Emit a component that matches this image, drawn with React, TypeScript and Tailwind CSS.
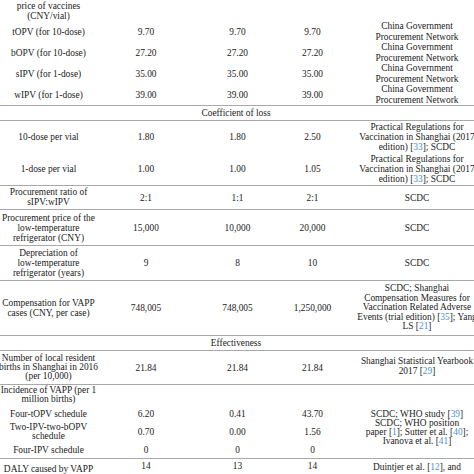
import React from "react";

type Cell = React.ReactNode;

interface Row {
  h: number;
  cells?: Cell[];
  section?: string;
  border?: boolean;
}

function Ref({ n }: { n: number }) {
  return (
    <>
      [<span className="text-[#4b8fd3]">{n}</span>]
    </>
  );
}

function Lines({ lines, lh = "leading-[10px]" }: { lines: Cell[]; lh?: string }) {
  return (
    <div className={`flex flex-col items-center whitespace-nowrap ${lh}`}>
      {lines.map((l, i) => (
        <span key={i}>{l}</span>
      ))}
    </div>
  );
}

const govt = <Lines lines={["China Government", "Procurement Network"]} lh="leading-[10.5px]" />;
const regs = (
  <Lines
    lines={[
      "Practical Regulations for",
      "Vaccination in Shanghai (2017",
      <>
        edition) <Ref n={33} />; SCDC
      </>,
    ]}
  />
);

const rows: Row[] = [
  { h: 21, cells: [<Lines lines={["price of vaccines", "(CNY/vial)"]} />, "", "", "", ""] },
  { h: 20, cells: ["tOPV (for 10-dose)", "9.70", "9.70", "9.70", govt] },
  { h: 20, cells: ["bOPV (for 10-dose)", "27.20", "27.20", "27.20", govt] },
  { h: 20, cells: ["sIPV (for 1-dose)", "35.00", "35.00", "35.00", govt] },
  { h: 21, cells: ["wIPV (for 1-dose)", "39.00", "39.00", "39.00", govt], border: true },
  { h: 15, section: "Coefficient of loss", border: true },
  { h: 33, cells: ["10-dose per vial", "1.80", "1.80", "2.50", regs] },
  { h: 32, cells: ["1-dose per vial", "1.00", "1.00", "1.05", regs], border: true },
  {
    h: 24,
    cells: [<Lines lines={["Procurement ratio of", "sIPV:wIPV"]} lh="leading-[9.5px]" />, "2:1", "1:1", "2:1", "SCDC"],
    border: true,
  },
  {
    h: 36,
    cells: [
      <Lines lines={["Procurement price of the", "low-temperature", "refrigerator (CNY)"]} />,
      "15,000",
      "10,000",
      "20,000",
      "SCDC",
    ],
    border: true,
  },
  {
    h: 35,
    cells: [
      <Lines lines={["Depreciation of", "low-temperature", "refrigerator (years)"]} />,
      "9",
      "8",
      "10",
      "SCDC",
    ],
    border: true,
  },
  {
    h: 55,
    cells: [
      <Lines lines={["Compensation for VAPP", "cases (CNY, per case)"]} />,
      "748,005",
      "748,005",
      "1,250,000",
      <Lines
        lh="leading-[9.5px]"
        lines={[
          "SCDC; Shanghai",
          "Compensation Measures for",
          "Vaccination Related Adverse",
          <>
            Events (trial edition) <Ref n={35} />; Yang
          </>,
          <>
            LS <Ref n={21} />
          </>,
        ]}
      />,
    ],
    border: true,
  },
  { h: 15, section: "Effectiveness", border: true },
  {
    h: 34,
    cells: [
      <Lines lh="leading-[9px]" lines={["Number of local resident", "births in Shanghai in 2016", "(per 10,000)"]} />,
      "21.84",
      "21.84",
      "21.84",
      <div className="-mt-[4px]">
        <Lines
          lines={[
            "Shanghai Statistical Yearbook",
            <>
              2017 <Ref n={29} />
            </>,
          ]}
        />
      </div>,
    ],
    border: true,
  },
  {
    h: 21,
    cells: [<Lines lh="leading-[9px]" lines={["Incidence of VAPP (per 1", "million births)"]} />, "", "", "", ""],
  },
  {
    h: 16,
    cells: [
      "Four-tOPV schedule",
      "6.20",
      "0.41",
      "43.70",
      <>
        SCDC; WHO study <Ref n={39} />
      </>,
    ],
  },
  {
    h: 21,
    cells: [
      <Lines lh="leading-[9px]" lines={["Two-IPV-two-bOPV", "schedule"]} />,
      "0.70",
      "0.00",
      "1.56",
      <div className="h-[21px] flex flex-col justify-center">
        <Lines
          lh="leading-[9px]"
          lines={[
            "SCDC; WHO position",
            <>
              paper <Ref n={1} />; Sutter et al. <Ref n={40} />;
            </>,
            <>
              Ivanova et al. <Ref n={41} />
            </>,
          ]}
        />
      </div>,
    ],
  },
  { h: 16, cells: ["Four-IPV schedule", "0", "0", "0", ""], border: true },
];

const widths = ["w-[97px]", "w-[98px]", "w-[85px]", "w-[65px]", "w-[144px]"];

export default function App() {
  return (
    <div className="w-[474px] h-[474px] overflow-hidden bg-white text-[#222] text-[9.4px] leading-[10px] font-['Liberation_Serif',serif]">
      <table className="table-fixed w-[489px]">
        <colgroup>
          {widths.map((w, i) => (
            <col key={i} className={w} />
          ))}
        </colgroup>
        <tbody>
          {rows.map((r, i) =>
            r.section ? (
              <tr key={i} style={{ height: r.h }}>
                <td
                  colSpan={5}
                  className={`p-0 pr-[17px] text-center align-middle ${r.border ? "border-b border-[#a9a9a9]" : ""}`}
                >
                  {r.section}
                </td>
              </tr>
            ) : (
              <tr key={i} style={{ height: r.h }}>
                {r.cells!.map((c, j) => (
                  <td
                    key={j}
                    className={`p-0 text-center align-middle whitespace-nowrap ${r.border ? "border-b border-[#a9a9a9]" : ""}`}
                  >
                    {c}
                  </td>
                ))}
              </tr>
            )
          )}
          <tr className="h-[30px]">
            <td className="p-0 pt-[5px] text-center align-top whitespace-nowrap">DALY caused by VAPP</td>
            <td className="p-0 pt-[2px] text-center align-top">14</td>
            <td className="p-0 pt-[2px] text-center align-top">13</td>
            <td className="p-0 pt-[2px] text-center align-top">14</td>
            <td className="p-0 pt-[3px] text-center align-top whitespace-nowrap">
              Duintjer et al. <Ref n={12} />, and
            </td>
          </tr>
        </tbody>
      </table>
    </div>
  );
}
